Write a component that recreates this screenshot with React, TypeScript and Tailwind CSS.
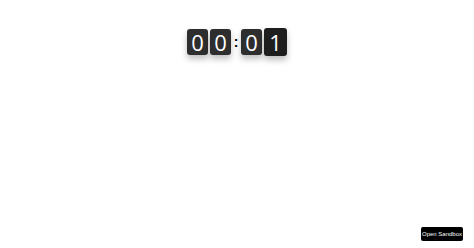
import React from "react";

function Card({ d, last }: { d: string; last?: boolean }) {
  return (
    <div
      className={
        "relative flex items-center justify-center rounded-[3px] text-white shadow-[0_4px_6px_rgba(0,0,0,0.25)] " +
        (last ? "w-[23px] h-[28px] bg-[#1e1e1e]" : "w-[21px] h-[26px] bg-[#2e2e2e]")
      }
      style={{ fontFamily: "'Open Sans', 'Liberation Sans', sans-serif" }}
    >
      <span className="text-[22px] leading-none font-normal">{d}</span>
    </div>
  );
}

export default function App() {
  return (
    <div className="w-[474px] h-[248px] bg-white relative">
      <div className="flex justify-center pt-[28px]">
        <div className="flex items-center">
          <div className="flex gap-[2px]">
            <Card d="0" />
            <Card d="0" />
          </div>
          <div className="w-[10px] flex justify-center text-[14px] font-bold text-black" style={{ fontFamily: "'Liberation Sans', sans-serif" }}>:</div>
          <div className="flex gap-[2px] items-center">
            <Card d="0" />
            <Card d="1" last />
          </div>
        </div>
      </div>
      <div className="absolute right-[11px] bottom-[7px]">
        <div
          className="w-[42px] h-[14px] flex items-center justify-center bg-black text-white text-[6px] rounded-[2px] whitespace-nowrap"
          style={{ fontFamily: "'Liberation Sans', sans-serif" }}
        >
          Open Sandbox
        </div>
      </div>
    </div>
  );
}
